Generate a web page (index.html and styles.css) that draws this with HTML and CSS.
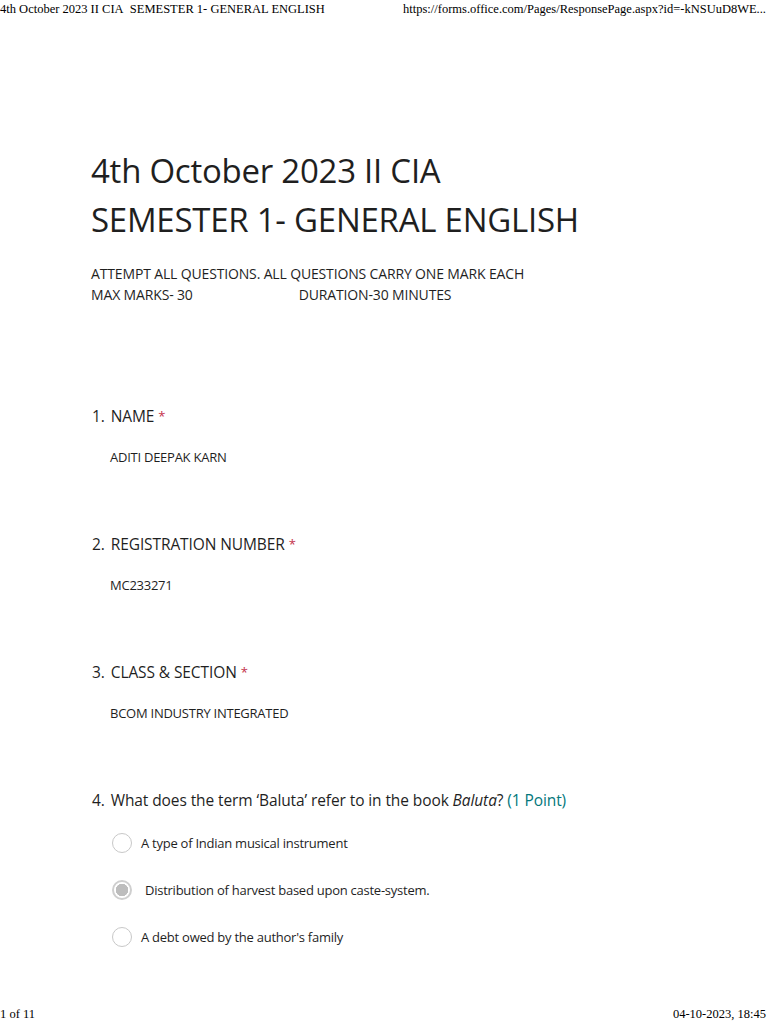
FILE: index.html
```html
<!DOCTYPE html>
<html>
<head>
<meta charset="utf-8">
<link rel="stylesheet" href="styles.css">
</head>
<body>
<div class="page">
  <header class="print-head">
    <span>4th October 2023 II CIA&nbsp; SEMESTER 1- GENERAL ENGLISH</span>
    <span>https://forms.office.com/Pages/ResponsePage.aspx?id=-kNSUuD8WE...</span>
  </header>
  <main class="form">
    <h1 class="title">4th October 2023 II CIA<br>SEMESTER 1- GENERAL ENGLISH</h1>
    <div class="desc">
      <div>ATTEMPT ALL QUESTIONS. ALL QUESTIONS CARRY ONE MARK EACH</div>
      <div>MAX MARKS- 30<span class="gap"></span>DURATION-30 MINUTES</div>
    </div>

    <section class="question">
      <div class="q-title"><span class="num">1.</span><span>NAME <span class="req">*</span></span></div>
      <div class="answer">ADITI DEEPAK KARN</div>
    </section>

    <section class="question">
      <div class="q-title"><span class="num">2.</span><span>REGISTRATION NUMBER <span class="req">*</span></span></div>
      <div class="answer">MC233271</div>
    </section>

    <section class="question">
      <div class="q-title"><span class="num">3.</span><span>CLASS &amp; SECTION <span class="req">*</span></span></div>
      <div class="answer">BCOM INDUSTRY INTEGRATED</div>
    </section>

    <section class="question">
      <div class="q-title"><span class="num">4.</span><span>What does the term ‘Baluta’ refer to in the book <i>Baluta</i>? <span class="pts">(1 Point)</span></span></div>
      <div class="options">
        <div class="option"><span class="radio"></span><span>A type of Indian musical instrument</span></div>
        <div class="option"><span class="radio checked"></span><span class="sel">Distribution of harvest based upon caste-system.</span></div>
        <div class="option"><span class="radio"></span><span>A debt owed by the author's family</span></div>
      </div>
    </section>
  </main>
  <footer class="print-foot">
    <span>1 of 11</span>
    <span>04-10-2023, 18:45</span>
  </footer>
</div>
</body>
</html>
```

FILE: styles.css
```css
html, body {
  margin: 0;
  padding: 0;
  background: #ffffff;
}
.page {
  width: 768px;
  height: 1024px;
  display: flex;
  flex-direction: column;
  overflow: hidden;
}
.print-head, .print-foot {
  display: flex;
  justify-content: space-between;
  font-family: "Liberation Serif", "Times New Roman", serif;
  font-size: 12.5px;
  color: #000;
  line-height: 16px;
  padding: 1px 2px 0 0;
}
.print-foot {
  padding: 0 2px 2px 0;
}
.form {
  flex: 1;
  padding: 0 0 0 91px;
  font-family: "Open Sans", "Noto Sans", sans-serif;
  color: #1f1f1f;
}
.title {
  margin: 130px 0 0 0;
  font-weight: 400;
  font-size: 33px;
  line-height: 48.5px;
  letter-spacing: -0.25px;
}
.desc {
  margin-top: 19px;
  font-size: 14px;
  line-height: 21px;
  letter-spacing: -0.15px;
}
.gap {
  display: inline-block;
  width: 106px;
}
.desc + .question {
  margin-top: 99px;
}
.question + .question {
  margin-top: 66px;
}
.q-title {
  display: flex;
  gap: 6px;
  padding-left: 1px;
  font-size: 15.5px;
  line-height: 24px;
  letter-spacing: -0.1px;
}
.req {
  color: #c4314b;
  font-size: 13px;
  vertical-align: 1px;
}
.pts {
  color: #03787c;
}
.answer {
  margin: 20px 0 0 19px;
  font-size: 13px;
  line-height: 18px;
  letter-spacing: -0.25px;
}
.options {
  margin: 21px 0 0 21px;
  display: flex;
  flex-direction: column;
  gap: 27px;
}
.option {
  display: flex;
  align-items: center;
  gap: 9px;
  font-size: 13px;
  line-height: 20px;
  letter-spacing: -0.25px;
}
.radio {
  box-sizing: border-box;
  width: 20px;
  height: 20px;
  border-radius: 50%;
  border: 1.5px solid #c8c8c8;
  flex: none;
}
.radio.checked {
  border: 2.5px solid #cfcfcf;
  background: radial-gradient(circle, #bdbdbd 0 6px, #ffffff 6.5px);
}
.sel {
  padding-left: 4px;
}
```
